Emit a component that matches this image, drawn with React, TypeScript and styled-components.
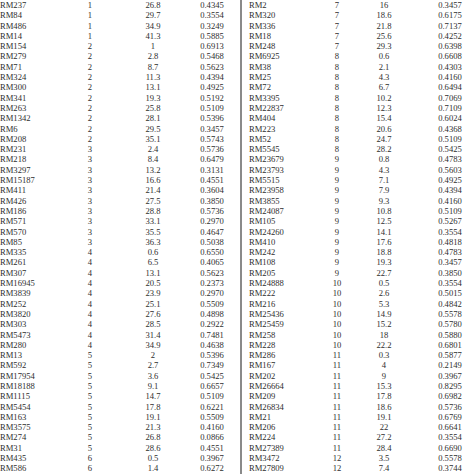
import styled, { createGlobalStyle } from 'styled-components';

type Marker = [string, string, string, string];

const leftRows: Marker[] = [
    ['RM237', '1', '26.8', '0.4345'],
    ['RM84', '1', '29.7', '0.3554'],
    ['RM486', '1', '34.9', '0.3249'],
    ['RM14', '1', '41.3', '0.5885'],
    ['RM154', '2', '1', '0.6913'],
    ['RM279', '2', '2.8', '0.5468'],
    ['RM71', '2', '8.7', '0.5623'],
    ['RM324', '2', '11.3', '0.4394'],
    ['RM300', '2', '13.1', '0.4925'],
    ['RM341', '2', '19.3', '0.5192'],
    ['RM263', '2', '25.8', '0.5109'],
    ['RM1342', '2', '28.1', '0.5396'],
    ['RM6', '2', '29.5', '0.3457'],
    ['RM208', '2', '35.1', '0.5743'],
    ['RM231', '3', '2.4', '0.5736'],
    ['RM218', '3', '8.4', '0.6479'],
    ['RM3297', '3', '13.2', '0.3131'],
    ['RM15187', '3', '16.6', '0.4551'],
    ['RM411', '3', '21.4', '0.3604'],
    ['RM426', '3', '27.5', '0.3850'],
    ['RM186', '3', '28.8', '0.5736'],
    ['RM571', '3', '33.1', '0.2970'],
    ['RM570', '3', '35.5', '0.4647'],
    ['RM85', '3', '36.3', '0.5038'],
    ['RM335', '4', '0.6', '0.6550'],
    ['RM261', '4', '6.5', '0.4065'],
    ['RM307', '4', '13.1', '0.5623'],
    ['RM16945', '4', '20.5', '0.2373'],
    ['RM3839', '4', '23.9', '0.2970'],
    ['RM252', '4', '25.1', '0.5509'],
    ['RM3820', '4', '27.6', '0.4898'],
    ['RM303', '4', '28.5', '0.2922'],
    ['RM5473', '4', '31.4', '0.7481'],
    ['RM280', '4', '34.9', '0.4638'],
    ['RM13', '5', '2', '0.5396'],
    ['RM592', '5', '2.7', '0.7349'],
    ['RM17954', '5', '3.6', '0.5425'],
    ['RM18188', '5', '9.1', '0.6657'],
    ['RM1115', '5', '14.7', '0.5109'],
    ['RM5454', '5', '17.8', '0.6221'],
    ['RM163', '5', '19.1', '0.5509'],
    ['RM3575', '5', '21.3', '0.4160'],
    ['RM274', '5', '26.8', '0.0866'],
    ['RM31', '5', '28.6', '0.4551'],
    ['RM435', '6', '0.5', '0.3967'],
    ['RM586', '6', '1.4', '0.6272'],
];

const rightRows: Marker[] = [
    ['RM2', '7', '16', '0.3457'],
    ['RM320', '7', '18.6', '0.6175'],
    ['RM336', '7', '21.8', '0.7137'],
    ['RM18', '7', '25.6', '0.4252'],
    ['RM248', '7', '29.3', '0.6398'],
    ['RM6925', '8', '0.6', '0.6608'],
    ['RM38', '8', '2.1', '0.4303'],
    ['RM25', '8', '4.3', '0.4160'],
    ['RM72', '8', '6.7', '0.6494'],
    ['RM3395', '8', '10.2', '0.7069'],
    ['RM22837', '8', '12.3', '0.7109'],
    ['RM404', '8', '15.4', '0.6024'],
    ['RM223', '8', '20.6', '0.4368'],
    ['RM52', '8', '24.7', '0.5109'],
    ['RM5545', '8', '28.2', '0.5425'],
    ['RM23679', '9', '0.8', '0.4783'],
    ['RM23793', '9', '4.3', '0.5603'],
    ['RM5515', '9', '7.1', '0.4925'],
    ['RM23958', '9', '7.9', '0.4394'],
    ['RM3855', '9', '9.3', '0.4160'],
    ['RM24087', '9', '10.8', '0.5109'],
    ['RM105', '9', '12.5', '0.5267'],
    ['RM24260', '9', '14.1', '0.3554'],
    ['RM410', '9', '17.6', '0.4818'],
    ['RM242', '9', '18.8', '0.4783'],
    ['RM108', '9', '19.3', '0.3457'],
    ['RM205', '9', '22.7', '0.3850'],
    ['RM24888', '10', '0.5', '0.3554'],
    ['RM222', '10', '2.6', '0.5015'],
    ['RM216', '10', '5.3', '0.4842'],
    ['RM25436', '10', '14.9', '0.5578'],
    ['RM25459', '10', '15.2', '0.5780'],
    ['RM258', '10', '18', '0.5880'],
    ['RM228', '10', '22.2', '0.6801'],
    ['RM286', '11', '0.3', '0.5877'],
    ['RM167', '11', '4', '0.2149'],
    ['RM202', '11', '9', '0.3967'],
    ['RM26664', '11', '15.3', '0.8295'],
    ['RM209', '11', '17.8', '0.6982'],
    ['RM26834', '11', '18.6', '0.5736'],
    ['RM21', '11', '19.1', '0.6769'],
    ['RM206', '11', '22', '0.6641'],
    ['RM224', '11', '27.2', '0.3554'],
    ['RM27389', '11', '28.4', '0.6690'],
    ['RM3472', '12', '3.5', '0.5578'],
    ['RM27809', '12', '7.4', '0.3744'],
];

const GlobalStyle = createGlobalStyle`
    html, body {
        margin: 0;
        padding: 0;
        background: #ffffff;
    }
`

const Page = styled('div')`
    width: 474px;
    height: 474px;
    overflow: hidden;
    display: grid;
    grid-template-columns: 240px 1fr;
    font-family: "Liberation Serif", "Times New Roman", serif;
    font-size: 8.6px;
    color: #2e2e2e;
    background: #ffffff;
`

const Half = styled('div')<{ $divider?: boolean }>`
    display: flex;
    flex-direction: column;
    padding-top: 0px;
    padding-left: ${p => (p.$divider ? '7px' : '0px')};
    border-left: ${p => (p.$divider ? '2px solid #8a8a8a' : 'none')};
`

const Row = styled('div')<{ $cols: string }>`
    display: grid;
    grid-template-columns: ${p => p.$cols};
    height: 10.3px;
    line-height: 10.3px;
    white-space: nowrap;
`

const Name = styled('span')`
    text-align: left;
`

const Cell = styled('span')`
    text-align: center;
`

const LEFT_COLS = '60px 60px 66px 52px';
const RIGHT_COLS = '60px 56px 38px 94px';

const Column = ({ rows, cols, divider }: { rows: Marker[], cols: string, divider?: boolean }) => (
    <Half $divider={divider}>
        {rows.map((r, key) => (
            <Row key={key} $cols={cols}>
                <Name>{r[0]}</Name>
                <Cell>{r[1]}</Cell>
                <Cell>{r[2]}</Cell>
                <Cell>{r[3]}</Cell>
            </Row>
        ))}
    </Half>
)

const App = () => {
    return (
        <>
            <GlobalStyle />
            <Page>
                <Column rows={leftRows} cols={LEFT_COLS} />
                <Column rows={rightRows} cols={RIGHT_COLS} divider />
            </Page>
        </>
    )
}

export default App
